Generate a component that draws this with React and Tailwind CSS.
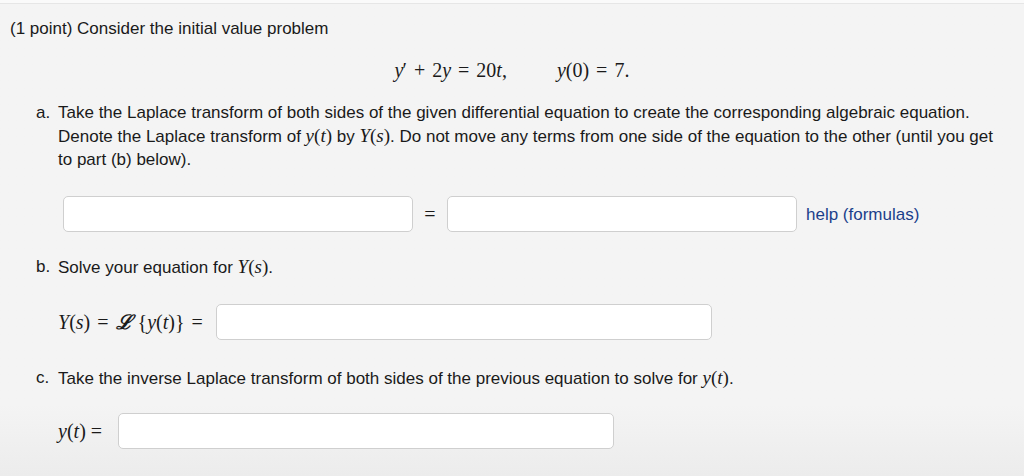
import React from "react";

const sans = "font-['Liberation_Sans',Arial,sans-serif]";
const serif = "font-['Liberation_Serif','Times_New_Roman',serif]";

// small inline math helper: italic serif for variables
const V = ({ children }) => <i className={serif}>{children}</i>;
const M = ({ children, className = "text-[19px]" }) => (
  <span className={`${serif} not-italic ${className}`}>{children}</span>
);
const Op = ({ children, wide }) => (
  <span className={wide ? "mx-[7px]" : "mx-[5px]"}>{children}</span>
);

const Field = ({ w }) => (
  <div className={`h-[36px] bg-white border border-[#cfcfcf] rounded-[5px] ${w}`} />
);

export default function App() {
  return (
    <div
      className={`w-[1024px] h-[476px] overflow-hidden bg-gradient-to-b from-[#f4f4f4] from-85% to-[#ececec] text-[#1a1a1a] ${sans} text-[17px] leading-[23px]`}
    >
      <div className="h-[4px] bg-[#fafafa] border-b border-[#e6e6e6]" />

      <div className="pl-[10px] pt-[13px]">(1 point) Consider the initial value problem</div>

      {/* given equation */}
      <div className="flex justify-center pt-[20px] h-[41px] items-center">
        <M className="text-[20px]">
          <i>y</i>
          <span className="-ml-[1px]">′</span>
          <Op wide>+</Op>2<i>y</i>
          <Op wide>=</Op>20<i>t</i>,
        </M>
        <M className="text-[20px] ml-[50px]">
          <i>y</i>(0)<Op wide>=</Op>7.
        </M>
      </div>

      {/* part a */}
      <div className="flex pl-[36px] pt-[20px] pr-[8px]">
        <span className="w-[22px] shrink-0">a.</span>
        <div>
          Take the Laplace transform of both sides of the given differential equation to create the corresponding algebraic equation.
          <br />
          Denote the Laplace transform of{" "}
          <M>
            <V>y</V>(<V>t</V>)
          </M>{" "}
          by{" "}
          <M>
            <V>Y</V>(<V>s</V>)
          </M>
          . Do not move any terms from one side of the equation to the other (until you get
          <br />
          to part (b) below).
        </div>
      </div>

      <div className="flex items-center pl-[63px] pt-[25px]">
        <Field w="w-[350px]" />
        <span className={`${serif} text-[20px] w-[34px] text-center`}>=</span>
        <Field w="w-[350px]" />
        <span className="ml-[9px] text-[#1b3f8b]">help (formulas)</span>
      </div>

      {/* part b */}
      <div className="flex pl-[36px] pt-[23px]">
        <span className="w-[22px] shrink-0">b.</span>
        <div>
          Solve your equation for{" "}
          <M>
            <V>Y</V>(<V>s</V>)
          </M>
          .
        </div>
      </div>

      <div className="flex items-center pl-[58px] pt-[25px]">
        <M className="text-[20px] w-[158px]">
          <V>Y</V>(<V>s</V>)<Op wide>=</Op>
          <span className="italic font-bold">ℒ</span> {"{"}
          <V>y</V>(<V>t</V>){"}"}
          <Op wide>=</Op>
        </M>
        <Field w="w-[496px]" />
      </div>

      {/* part c */}
      <div className="flex pl-[36px] pt-[26px]">
        <span className="w-[22px] shrink-0">c.</span>
        <div>
          Take the inverse Laplace transform of both sides of the previous equation to solve for{" "}
          <M>
            <V>y</V>(<V>t</V>)
          </M>
          .
        </div>
      </div>

      <div className="flex items-center pl-[58px] pt-[23px]">
        <M className="text-[20px] w-[60px]">
          <V>y</V>(<V>t</V>)<Op>=</Op>
        </M>
        <Field w="w-[496px]" />
      </div>
    </div>
  );
}
